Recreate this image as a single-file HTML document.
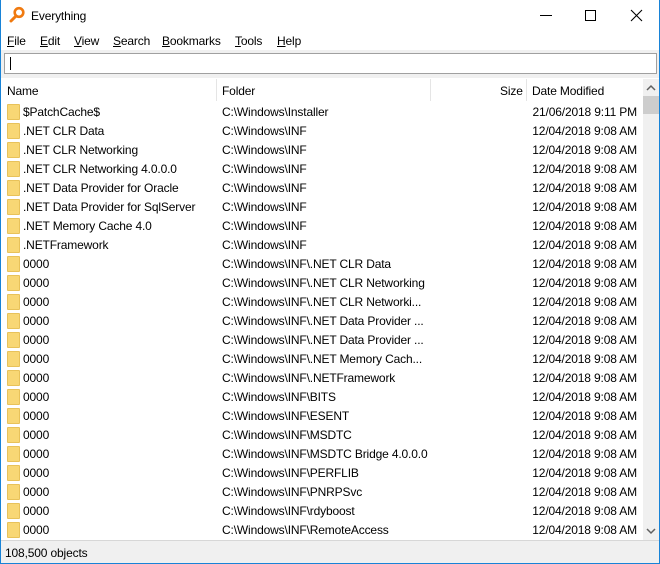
<!DOCTYPE html>
<html><head><style>
*{margin:0;padding:0;box-sizing:border-box}
body{width:660px;height:564px;background:#fff;font-family:"Liberation Sans",sans-serif;font-size:12px;color:#000;position:relative;overflow:hidden;letter-spacing:-0.15px}
.win{position:absolute;left:0;top:0;width:660px;height:564px;border:1px solid #1883d7;border-top:none}
.t{position:absolute;white-space:nowrap}
.menu span{position:absolute;top:34px;font-size:12px}
.menu u{text-decoration:underline}
.row{position:absolute;left:1px;width:642px;height:19px}
.row .ic{position:absolute;left:6px;top:2px;width:13px;height:16px;background:#f8d775;border:1px solid #e8c25a;border-radius:1px}
.row .n{position:absolute;left:22px;top:3px}
.row .f{position:absolute;left:221px;top:3px}
.row .d{position:absolute;right:6px;top:3px}
</style></head><body>
<div class="win"></div>
<svg style="position:absolute;left:9px;top:6px" width="17" height="18" viewBox="0 0 17 18"><circle cx="10" cy="6.5" r="4.3" fill="none" stroke="#f07a10" stroke-width="2.6"/><line x1="7" y1="10" x2="2" y2="15" stroke="#f07a10" stroke-width="3" stroke-linecap="round"/></svg>
<div class="t" style="left:31px;top:9px;font-size:12px">Everything</div>
<div class="t" style="left:540px;top:15px;width:12px;height:1px;background:#000"></div>
<div class="t" style="left:585px;top:10px;width:11px;height:11px;border:1px solid #000"></div>
<svg style="position:absolute;left:630px;top:9px" width="13" height="13"><path d="M1 1L12 12M12 1L1 12" stroke="#000" stroke-width="1.1"/></svg>
<div class="menu">
<span style="left:7px"><u>F</u>ile</span>
<span style="left:40px"><u>E</u>dit</span>
<span style="left:74px"><u>V</u>iew</span>
<span style="left:113px"><u>S</u>earch</span>
<span style="left:162px"><u>B</u>ookmarks</span>
<span style="left:235px"><u>T</u>ools</span>
<span style="left:277px"><u>H</u>elp</span>
</div>
<div style="position:absolute;left:1px;top:50px;width:658px;height:28px;background:#f0f0f0"></div>
<div style="position:absolute;left:4px;top:53px;width:653px;height:21px;background:#fff;border:1px solid #a0a0a0"></div>
<div style="position:absolute;left:10px;top:57px;width:1px;height:13px;background:#000"></div>
<div style="position:absolute;left:1px;top:78px;width:642px;height:24px;background:#fff"></div>
<div style="position:absolute;left:216px;top:79px;width:1px;height:22px;background:#e5e5e5"></div>
<div style="position:absolute;left:430px;top:79px;width:1px;height:22px;background:#e5e5e5"></div>
<div style="position:absolute;left:526px;top:79px;width:1px;height:22px;background:#e5e5e5"></div>
<div class="t" style="left:7px;top:84px">Name</div>
<div class="t" style="left:222px;top:84px">Folder</div>
<div class="t" style="left:500px;top:84px">Size</div>
<div class="t" style="left:532px;top:84px">Date Modified</div>
<div style="position:absolute;left:643px;top:79px;width:16px;height:461px;background:#f0f0f0"></div>
<div style="position:absolute;left:643px;top:96px;width:16px;height:18px;background:#cdcdcd"></div>
<svg style="position:absolute;left:646px;top:84px" width="10" height="8"><path d="M1 6L5 2L9 6" fill="none" stroke="#606060" stroke-width="1.5"/></svg>
<svg style="position:absolute;left:646px;top:527px" width="10" height="8"><path d="M1 2L5 6L9 2" fill="none" stroke="#606060" stroke-width="1.5"/></svg>
<div style="position:absolute;left:1px;top:540px;width:658px;height:23px;background:#f0f0f0;border-top:1px solid #d7d7d7"></div>
<div class="t" style="left:5px;top:546px">108,500 objects</div>
<div class="row" style="top:102px"><div class="ic"></div><div class="n">$PatchCache$</div><div class="f">C:\Windows\Installer</div><div class="d">21/06/2018 9:11 PM</div></div>
<div class="row" style="top:121px"><div class="ic"></div><div class="n">.NET CLR Data</div><div class="f">C:\Windows\INF</div><div class="d">12/04/2018 9:08 AM</div></div>
<div class="row" style="top:140px"><div class="ic"></div><div class="n">.NET CLR Networking</div><div class="f">C:\Windows\INF</div><div class="d">12/04/2018 9:08 AM</div></div>
<div class="row" style="top:159px"><div class="ic"></div><div class="n">.NET CLR Networking 4.0.0.0</div><div class="f">C:\Windows\INF</div><div class="d">12/04/2018 9:08 AM</div></div>
<div class="row" style="top:178px"><div class="ic"></div><div class="n">.NET Data Provider for Oracle</div><div class="f">C:\Windows\INF</div><div class="d">12/04/2018 9:08 AM</div></div>
<div class="row" style="top:197px"><div class="ic"></div><div class="n">.NET Data Provider for SqlServer</div><div class="f">C:\Windows\INF</div><div class="d">12/04/2018 9:08 AM</div></div>
<div class="row" style="top:216px"><div class="ic"></div><div class="n">.NET Memory Cache 4.0</div><div class="f">C:\Windows\INF</div><div class="d">12/04/2018 9:08 AM</div></div>
<div class="row" style="top:235px"><div class="ic"></div><div class="n">.NETFramework</div><div class="f">C:\Windows\INF</div><div class="d">12/04/2018 9:08 AM</div></div>
<div class="row" style="top:254px"><div class="ic"></div><div class="n">0000</div><div class="f">C:\Windows\INF\.NET CLR Data</div><div class="d">12/04/2018 9:08 AM</div></div>
<div class="row" style="top:273px"><div class="ic"></div><div class="n">0000</div><div class="f">C:\Windows\INF\.NET CLR Networking</div><div class="d">12/04/2018 9:08 AM</div></div>
<div class="row" style="top:292px"><div class="ic"></div><div class="n">0000</div><div class="f">C:\Windows\INF\.NET CLR Networki...</div><div class="d">12/04/2018 9:08 AM</div></div>
<div class="row" style="top:311px"><div class="ic"></div><div class="n">0000</div><div class="f">C:\Windows\INF\.NET Data Provider ...</div><div class="d">12/04/2018 9:08 AM</div></div>
<div class="row" style="top:330px"><div class="ic"></div><div class="n">0000</div><div class="f">C:\Windows\INF\.NET Data Provider ...</div><div class="d">12/04/2018 9:08 AM</div></div>
<div class="row" style="top:349px"><div class="ic"></div><div class="n">0000</div><div class="f">C:\Windows\INF\.NET Memory Cach...</div><div class="d">12/04/2018 9:08 AM</div></div>
<div class="row" style="top:368px"><div class="ic"></div><div class="n">0000</div><div class="f">C:\Windows\INF\.NETFramework</div><div class="d">12/04/2018 9:08 AM</div></div>
<div class="row" style="top:387px"><div class="ic"></div><div class="n">0000</div><div class="f">C:\Windows\INF\BITS</div><div class="d">12/04/2018 9:08 AM</div></div>
<div class="row" style="top:406px"><div class="ic"></div><div class="n">0000</div><div class="f">C:\Windows\INF\ESENT</div><div class="d">12/04/2018 9:08 AM</div></div>
<div class="row" style="top:425px"><div class="ic"></div><div class="n">0000</div><div class="f">C:\Windows\INF\MSDTC</div><div class="d">12/04/2018 9:08 AM</div></div>
<div class="row" style="top:444px"><div class="ic"></div><div class="n">0000</div><div class="f">C:\Windows\INF\MSDTC Bridge 4.0.0.0</div><div class="d">12/04/2018 9:08 AM</div></div>
<div class="row" style="top:463px"><div class="ic"></div><div class="n">0000</div><div class="f">C:\Windows\INF\PERFLIB</div><div class="d">12/04/2018 9:08 AM</div></div>
<div class="row" style="top:482px"><div class="ic"></div><div class="n">0000</div><div class="f">C:\Windows\INF\PNRPSvc</div><div class="d">12/04/2018 9:08 AM</div></div>
<div class="row" style="top:501px"><div class="ic"></div><div class="n">0000</div><div class="f">C:\Windows\INF\rdyboost</div><div class="d">12/04/2018 9:08 AM</div></div>
<div class="row" style="top:520px"><div class="ic"></div><div class="n">0000</div><div class="f">C:\Windows\INF\RemoteAccess</div><div class="d">12/04/2018 9:08 AM</div></div>
</body></html>
